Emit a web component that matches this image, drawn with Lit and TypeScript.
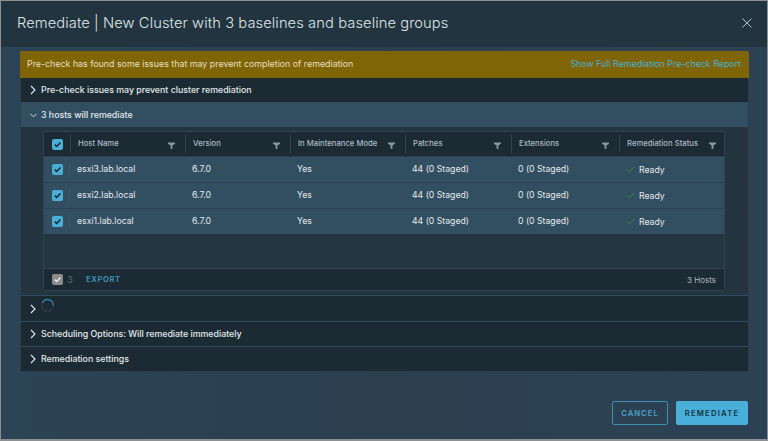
import { LitElement, html, css, svg } from 'lit';
import { customElement } from 'lit/decorators.js';

const columns = [
  'Host Name',
  'Version',
  'In Maintenance Mode',
  'Patches',
  'Extensions',
  'Remediation Status',
];
const hosts = ['esxi3.lab.local', 'esxi2.lab.local', 'esxi1.lab.local'];

const chevronRight = svg`<path d="M1 1 L5 5 L1 9" fill="none" stroke="currentColor" stroke-width="1.1"/>`;
const chevronDown = svg`<path d="M0.5 2 L4 5.5 L7.5 2" fill="none" stroke="currentColor" stroke-width="1"/>`;

@customElement('app-root')
export class AppRoot extends LitElement {
  static styles = css`
    :host {
      display: block;
      width: 768px;
      height: 441px;
      font-family: Inter, 'Open Sans', sans-serif;
      color: #e4eaee;
      background: #8c9092;
      padding: 1px 1px 2px 1px;
      box-sizing: border-box;
      overflow: hidden;
    }
    .modal {
      height: 100%;
      display: flex;
      flex-direction: column;
      background: linear-gradient(90deg, #2b4456 0%, #2b3f4f 50%, #2c4254 100%);
    }
    .head {
      height: 46px;
      flex: none;
      display: flex;
      align-items: center;
      justify-content: space-between;
      padding: 0 14px 3px 16px;
      background: #22343f;
      box-sizing: border-box;
    }
    h1 {
      margin: 0;
      font-size: 14.7px;
      font-weight: 300;
      letter-spacing: 0.09px;
      color: #dfe5e8;
    }
    .close {
      width: 12px;
      height: 12px;
      display: block;
      color: #b8c2c7;
    }
    .body {
      flex: 1;
      padding: 4px 18px 0 19px;
      min-height: 0;
    }
    .banner {
      height: 27px;
      display: flex;
      align-items: center;
      justify-content: space-between;
      padding: 0 8px 2px 7px;
      box-sizing: border-box;
      background: #806506;
      border-radius: 2px 2px 0 0;
      font-size: 8.85px;
      color: #e6dfc4;
    }
    .banner a {
      color: #49afd9;
      font-size: 8.85px;
    }
    .stack {
      display: flex;
      flex-direction: column;
      border: 1px solid #2e3f4a;
      border-top: 0;
      border-radius: 0 0 3px 3px;
      background: #33495c;
    }
    .bar {
      height: 24px;
      display: flex;
      align-items: center;
      gap: 5px;
      padding: 0 0 1px 9px;
      background: #1c2a33;
      box-sizing: border-box;
      font-size: 8.8px;
      font-weight: 500;
      color: #e4eaee;
    }
    .bar > svg {
      width: 6px;
      height: 10px;
      flex: none;
      margin-top: 1px;
    }
    .bar.open {
      height: 25px;
      background: #324f62;
      border-top: 1px solid #33495c;
      gap: 4px;
    }
    .bar.open > svg {
      width: 7px;
      height: 7px;
    }
    .bar.tall {
      height: 25px;
      margin-top: 1px;
    }
    .bar.mid {
      height: 24px;
      margin-top: 1px;
    }
    .bar > svg.spinner {
      width: 13px;
      height: 13px;
      margin: -6px 0 0 0;
      flex: none;
    }
    .panel {
      height: 168px;
      padding: 4px 23px 0 22px;
      background: #24353f;
      box-sizing: border-box;
    }
    .grid {
      height: 160px;
      display: flex;
      flex-direction: column;
      border: 1px solid #34444f;
      border-radius: 3px;
      box-sizing: border-box;
      background: #24363f;
    }
    .row {
      display: grid;
      grid-template-columns: 26px 115px 105px 115px 106px 108px 1fr;
      align-items: center;
      flex: none;
    }
    .row.header {
      height: 24px;
      background: #1c2a33;
      font-size: 7.7px;
      font-weight: 500;
      color: #adbbc4;
    }
    .row.host {
      height: 26px;
      background: #324f62;
      border-top: 1px solid #2b4354;
      box-sizing: border-box;
      font-size: 8.7px;
      color: #e4eaee;
    }
    .cell {
      display: flex;
      align-items: center;
      justify-content: space-between;
      height: 100%;
      padding: 0 10px 2px 7px;
      box-sizing: border-box;
      min-width: 0;
      white-space: nowrap;
    }
    .row.header .cell {
      height: 18px;
      padding-bottom: 1px;
      border-left: 1px solid #34444f;
    }
    .row.header .cell:last-child {
      padding-right: 8px;
    }
    .row.header .cell.check,
    .row.host .cell.check {
      border-left: 0;
      padding: 0 0 0 8px;
      justify-content: flex-start;
      position: relative;
    }
    .row.host .cell.check {
      padding-bottom: 1px;
    }
    .row.host .cell.check::after {
      content: '';
      position: absolute;
      right: 0;
      top: 5px;
      bottom: 5px;
      width: 1px;
      background: #3c586b;
    }
    .filter {
      width: 7px;
      height: 7px;
      flex: none;
      margin-top: 3px;
      color: #8a979f;
    }
    .box {
      width: 11px;
      height: 11px;
      border-radius: 2px;
      background: #49afd9;
      display: block;
      flex: none;
      color: #17242c;
    }
    .box.grey {
      background: #8c8c8c;
      color: #e8e8e8;
    }
    .ready {
      display: flex;
      align-items: center;
      gap: 4px;
      margin-top: 2px;
    }
    .tick {
      width: 9px;
      height: 7px;
      color: #3e8a3c;
      flex: none;
    }
    .blank {
      flex: 1;
      background: #24363f;
    }
    .foot {
      height: 22px;
      flex: none;
      display: flex;
      align-items: center;
      border-top: 1px solid #34444f;
      padding: 0 8px 0 8px;
      background: #1c2a33;
      box-sizing: border-box;
      font-size: 8px;
      color: #adbbc4;
    }
    .count {
      color: #5a6a74;
      font-size: 9.5px;
      margin-left: 4px;
      width: 15px;
    }
    .export {
      color: #3d98bf;
      font-size: 7.7px;
      font-weight: 600;
      letter-spacing: 0.6px;
      margin-left: 4px;
    }
    .total {
      margin-left: auto;
    }
    .actions {
      flex: none;
      display: flex;
      justify-content: flex-end;
      gap: 8px;
      padding: 0 19px 14px 0;
    }
    button {
      height: 24px;
      box-sizing: border-box;
      border-radius: 2px;
      font: 600 7.7px Inter, 'Open Sans', sans-serif;
      letter-spacing: 1px;
      padding: 0;
    }
    .cancel {
      width: 56px;
      background: transparent;
      border: 1px solid #3d8fb5;
      color: #49a5cc;
    }
    .primary {
      width: 72px;
      background: #49afd9;
      border: 1px solid #49afd9;
      color: #14303f;
      letter-spacing: 1.2px;
    }
  `;

  private filterIcon() {
    return html`<svg class="filter" viewBox="0 0 7 7"><path d="M0 0.5 H7 V1.8 L4.4 3.6 V7 H2.6 V3.6 L0 1.8 Z" fill="currentColor"/></svg>`;
  }

  private checkbox(grey = false) {
    return html`<svg class="box ${grey ? 'grey' : ''}" viewBox="0 0 11 11"><path d="M2.8 5.6 L4.7 7.5 L8.4 3.4" fill="none" stroke="currentColor" stroke-width="1.5"/></svg>`;
  }

  render() {
    return html`
      <div class="modal">
        <div class="head">
          <h1>Remediate | New Cluster with 3 baselines and baseline groups</h1>
          <svg class="close" viewBox="0 0 12 12"><path d="M1.5 1.5 L10.5 10.5 M10.5 1.5 L1.5 10.5" stroke="currentColor" stroke-width="1" fill="none"/></svg>
        </div>
        <div class="body">
          <div class="banner">
            <span>Pre-check has found some issues that may prevent completion of remediation</span>
            <a>Show Full Remediation Pre-check Report</a>
          </div>
          <div class="stack">
            <div class="bar">
              <svg viewBox="0 0 6 10">${chevronRight}</svg>
              <span>Pre-check issues may prevent cluster remediation</span>
            </div>
            <div class="bar open">
              <svg viewBox="0 0 8 8">${chevronDown}</svg>
              <span>3 hosts will remediate</span>
            </div>
            <div class="panel">
              <div class="grid">
                <div class="row header">
                  <div class="cell check">${this.checkbox()}</div>
                  ${columns.map(
                    (c) => html`<div class="cell"><span>${c}</span>${this.filterIcon()}</div>`
                  )}
                </div>
                ${hosts.map(
                  (h) => html`
                    <div class="row host">
                      <div class="cell check">${this.checkbox()}</div>
                      <div class="cell">${h}</div>
                      <div class="cell">6.7.0</div>
                      <div class="cell">Yes</div>
                      <div class="cell">44 (0 Staged)</div>
                      <div class="cell">0 (0 Staged)</div>
                      <div class="cell">
                        <span class="ready">
                          <svg class="tick" viewBox="0 0 10 8"><path d="M0.5 4 L3.5 7 L9.5 0.8" fill="none" stroke="currentColor" stroke-width="1"/></svg>
                          Ready
                        </span>
                      </div>
                    </div>
                  `
                )}
                <div class="blank"></div>
                <div class="foot">
                  ${this.checkbox(true)}
                  <span class="count">3</span>
                  <span class="export">EXPORT</span>
                  <span class="total">3 Hosts</span>
                </div>
              </div>
            </div>
            <div class="bar tall">
              <svg viewBox="0 0 6 10">${chevronRight}</svg>
              <svg class="spinner" viewBox="0 0 12 12">
                <circle cx="6" cy="6" r="5.4" fill="none" stroke="#2c4452" stroke-width="1"/>
                <path d="M1.2 3.5 A5.4 5.4 0 0 1 11.4 6" fill="none" stroke="#3d8fb5" stroke-width="1"/>
              </svg>
            </div>
            <div class="bar mid">
              <svg viewBox="0 0 6 10">${chevronRight}</svg>
              <span>Scheduling Options: Will remediate immediately</span>
            </div>
            <div class="bar mid">
              <svg viewBox="0 0 6 10">${chevronRight}</svg>
              <span>Remediation settings</span>
            </div>
          </div>
        </div>
        <div class="actions">
          <button class="cancel">CANCEL</button>
          <button class="primary">REMEDIATE</button>
        </div>
      </div>
    `;
  }
}
